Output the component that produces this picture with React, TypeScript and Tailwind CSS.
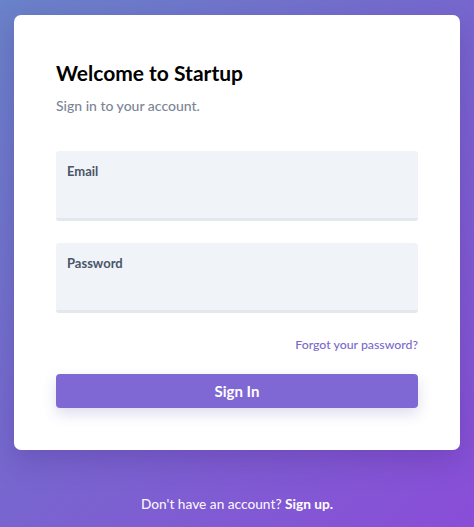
const Field = ({ label, type }: { label: string; type: string }) => (
  <label className="flex h-[70px] flex-col rounded-[3px] border-b-[3px] border-[#e3e8ef] bg-[#f0f3f8] px-[11px] pt-[12px]">
    <span className="text-[13px] font-bold leading-4 text-[#4a5568]">{label}</span>
    <input type={type} className="mt-1 bg-transparent text-sm outline-none" />
  </label>
);

export default function App() {
  return (
    <div
      className="flex h-[527px] w-[474px] flex-col items-center bg-[linear-gradient(135deg,#6a83c9_0%,#7866cf_50%,#8a4dd8_100%)] px-[14px] pt-[15px]"
      style={{ fontFamily: "Lato, 'Open Sans', sans-serif" }}
    >
      <div className="flex h-[435px] w-full flex-col rounded-[7px] bg-white px-[42px] pt-[44px] shadow-[0_10px_30px_rgba(60,30,120,0.25)]">
        <h1 className="text-[21px] font-bold leading-7 text-black">Welcome to Startup</h1>
        <p className="mt-[9px] text-[14px] font-medium leading-5 text-[#7b8597]">Sign in to your account.</p>

        <div className="mt-[35px] flex flex-col gap-[22px]">
          <Field label="Email" type="email" />
          <Field label="Password" type="password" />
        </div>

        <div className="mt-[24px] flex justify-end">
          <a className="text-[12.3px] font-medium leading-4 text-[#7a6acb]">Forgot your password?</a>
        </div>

        <button className="mt-[21px] h-[34px] w-full rounded-[4px] bg-[#8068d4] text-[15px] font-bold text-white shadow-[0_6px_14px_rgba(80,60,160,0.18)]">
          Sign In
        </button>
      </div>

      <p className="mt-[44px] text-[13.7px] font-medium text-white/95">
        Don't have an account? <span className="font-bold text-white">Sign up.</span>
      </p>
    </div>
  );
}
